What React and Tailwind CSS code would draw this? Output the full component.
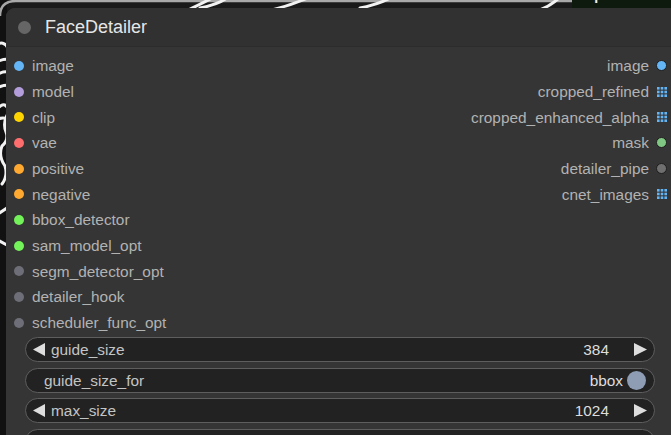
import React from "react";

const inputs = [
  ["image", "#64b5f6"],
  ["model", "#b39ddb"],
  ["clip", "#ffd500"],
  ["vae", "#ff6e6e"],
  ["positive", "#ffa931"],
  ["negative", "#ffa931"],
  ["bbox_detector", "#73f25a"],
  ["sam_model_opt", "#73f25a"],
  ["segm_detector_opt", "#6e6e78"],
  ["detailer_hook", "#6e6e78"],
  ["scheduler_func_opt", "#6e6e78"],
];

const outputs = [
  ["image", "circle", "#64b5f6"],
  ["cropped_refined", "grid", "#64b5f6"],
  ["cropped_enhanced_alpha", "grid", "#64b5f6"],
  ["mask", "circle", "#81c784"],
  ["detailer_pipe", "circle", "#6f6f6f"],
  ["cnet_images", "grid", "#64b5f6"],
];

function GridIcon({ color }) {
  const cells = [];
  for (let r = 0; r < 3; r++)
    for (let c = 0; c < 3; c++)
      cells.push(<rect key={r * 3 + c} x={c * 3.7} y={r * 3.7} width="2.6" height="2.6" fill={color} />);
  return (
    <svg width="10" height="10" viewBox="0 0 10 10">
      {cells}
    </svg>
  );
}

function LeftArrow() {
  return (
    <svg width="12" height="13" viewBox="0 0 12 13">
      <polygon points="12,0 12,13 0,6.5" fill="#dddddd" />
    </svg>
  );
}
function RightArrow() {
  return (
    <svg width="13" height="13" viewBox="0 0 13 13">
      <polygon points="0,0 0,13 13,6.5" fill="#dddddd" />
    </svg>
  );
}

function NumberWidget({ label, value }) {
  return (
    <div className="h-[25px] rounded-full border border-[#5e5e5e] bg-[#222222] flex items-center pl-[7px] pr-[7px] text-[15.4px]">
      <LeftArrow />
      <span className="ml-[6px] text-[#c4c4c4]">{label}</span>
      <span className="ml-auto text-[#dddddd]">{value}</span>
      <span className="ml-[25px] flex"><RightArrow /></span>
    </div>
  );
}

export default function App() {
  return (
    <div className="relative w-[671px] h-[435px] overflow-hidden bg-[#1a1a1a] font-['Liberation_Sans',Arial,sans-serif]">
      <svg className="absolute inset-0" width="671" height="435" viewBox="0 0 671 435">
        <rect x="0" y="0" width="7" height="435" fill="#111111" />
        <path d="M0 16 Q0 1 16 1 L572 1" stroke="#a8a8a8" strokeWidth="2.5" fill="none" />
        <g stroke="#f2f2f2" strokeWidth="3" fill="none" strokeLinecap="round">
          <path d="M-5 45 Q4 40 8 48" />
          <path d="M-4 62 Q5 58 10 60" />
          <path d="M-4 75 Q5 70 10 73" />
          <path d="M-4 88 Q6 84 10 86" />
          <path d="M-2 108 Q6 100 9 112 Q2 122 6 132 Q9 140 2 146 Q-2 156 5 166 Q8 176 2 184" />
          <path d="M-4 120 Q3 116 10 120" />
          <path d="M-5 216 Q4 210 10 206" />
          <path d="M-5 238 Q4 244 10 246" />
          <path d="M188 10 Q205 2 212 -2 M200 8 Q220 4 228 -3" />
          <path d="M272 10 Q292 5 310 -3" />
          <path d="M360 8 Q380 4 392 -3" />
          <path d="M540 10 Q552 5 560 -3" />
        </g>
      </svg>

      <div className="absolute left-[572px] top-[-12px] w-[120px] h-[20px] bg-[#0e1a0e] pl-[6px] pt-[0px] text-[14px] font-bold text-[#f0f0f0] leading-none">
        Impact Pack
      </div>

      <div className="absolute left-[6px] top-[8px] w-[665px] h-[440px] rounded-tl-[9px] bg-[#353535] overflow-hidden">
        <div className="h-[39px] bg-[#313131] border-b border-[#2c2c2c] flex items-center pl-[12px]">
          <div className="w-[13px] h-[13px] rounded-full bg-[#666666]" />
          <span className="ml-[14px] text-[18px] text-[#e6e6e6]">FaceDetailer</span>
        </div>

        <div className="pt-[6px] flex">
          <div className="flex flex-col">
            {inputs.map(([name, color]) => (
              <div key={name} className="h-[25.7px] flex items-center pl-[8px]">
                <div className="w-[10px] h-[10px] rounded-full" style={{ backgroundColor: color }} />
                <span className="ml-[8px] text-[15.4px] text-[#b2b2b2]">{name}</span>
              </div>
            ))}
          </div>
          <div className="flex flex-col ml-auto mr-[4px]">
            {outputs.map(([name, kind, color]) => (
              <div key={name} className="h-[25.7px] flex items-center justify-end">
                <span className="text-[15.4px] text-[#b2b2b2]">{name}</span>
                <div className="ml-[7px] w-[11px] h-[11px] flex items-center justify-center">
                  {kind === "grid" ? (
                    <GridIcon color={color} />
                  ) : (
                    <div className="w-[11px] h-[11px] rounded-full border border-[#1e1e1e]" style={{ backgroundColor: color }} />
                  )}
                </div>
              </div>
            ))}
          </div>
        </div>

        <div className="mt-[1.6px] ml-[19px] mr-[16px] flex flex-col gap-[5.5px]">
          <NumberWidget label="guide_size" value="384" />
          <div className="h-[25px] rounded-full border border-[#5e5e5e] bg-[#222222] flex items-center pl-[18px] pr-[8px] text-[15.4px]">
            <span className="text-[#c4c4c4]">guide_size_for</span>
            <span className="ml-auto text-[#dddddd]">bbox</span>
            <div className="ml-[4px] w-[19px] h-[19px] rounded-full bg-[#8e9db3]" />
          </div>
          <NumberWidget label="max_size" value="1024" />
          <div className="h-[25px] rounded-full border border-[#5e5e5e] bg-[#222222]" />
        </div>
      </div>
    </div>
  );
}
